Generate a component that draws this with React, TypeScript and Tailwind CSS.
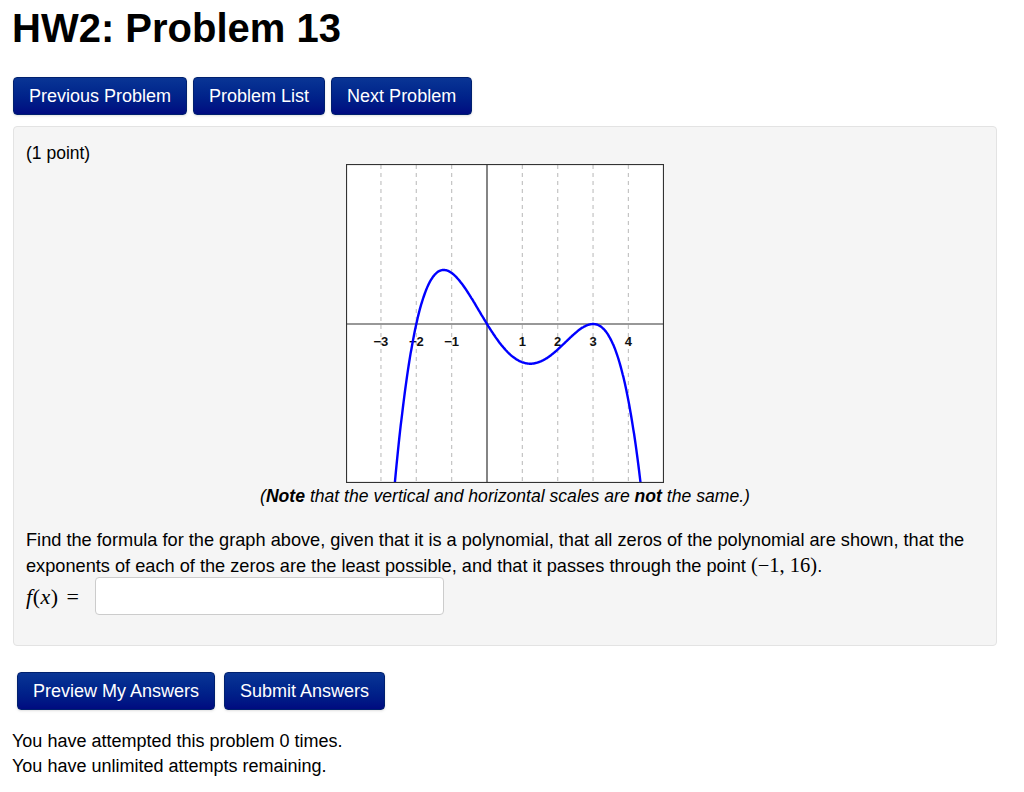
const UX = 35.35;
const UY = 3.19;
const OX = 141;
const OY = 160;

function f(x: number) {
  return -x * (x + 2) * (x - 3) * (x - 3);
}

const curve: string[] = [];
for (let x = -2.64; x <= 4.38; x += 0.02) {
  curve.push(`${(OX + x * UX).toFixed(1)},${(OY - f(x) * UY).toFixed(1)}`);
}

const ticks = [-3, -2, -1, 1, 2, 3, 4];

function Graph() {
  return (
    <svg width="318" height="319" viewBox="0 0 318 319" className="block bg-white">
      {ticks.map((t) => (
        <line
          key={t}
          x1={OX + t * UX}
          y1={1}
          x2={OX + t * UX}
          y2={318}
          stroke="#c4c4c4"
          strokeWidth="1.2"
          strokeDasharray="4 4"
        />
      ))}
      <line x1={0} y1={OY} x2={318} y2={OY} stroke="#333" strokeWidth="1.2" />
      <line x1={OX} y1={0} x2={OX} y2={319} stroke="#333" strokeWidth="1.2" />
      {ticks.map((t) => (
        <text
          key={t}
          x={OX + t * UX}
          y={182}
          textAnchor="middle"
          fontSize="13"
          fontWeight="bold"
          fontFamily="'Liberation Sans', Arial, sans-serif"
          fill="#111"
        >
          {t < 0 ? `−${-t}` : t}
        </text>
      ))}
      <svg x="0" y="0" width="318" height="318" overflow="hidden">
        <polyline points={curve.join(' ')} fill="none" stroke="#0000ff" strokeWidth="2.4" strokeLinejoin="round" />
      </svg>
      <rect x="0.5" y="0.5" width="317" height="318" fill="none" stroke="#333" strokeWidth="1.2" />
    </svg>
  );
}

function NavButton({ children }: { children: React.ReactNode }) {
  return (
    <button className="h-[38px] px-[15px] rounded-[4px] border border-[#00206e] bg-gradient-to-b from-[#0a3595] to-[#000a80] text-white text-[18px] leading-none shadow-sm">
      {children}
    </button>
  );
}

const serif = { fontFamily: "'Liberation Serif', 'Times New Roman', serif" };

export default function App() {
  return (
    <div
      className="min-h-[792px] bg-white text-black px-3 pt-[6px] text-[18px]"
      style={{ fontFamily: "'Liberation Sans', Arial, Helvetica, sans-serif" }}
    >
      <h1 className="text-[40px] leading-[44px] font-bold">HW2: Problem 13</h1>

      <div className="flex gap-[6px] mt-[27px] ml-px">
        <NavButton>Previous Problem</NavButton>
        <NavButton>Problem List</NavButton>
        <NavButton>Next Problem</NavButton>
      </div>

      <div className="mt-[11px] ml-px w-[984px] h-[520px] bg-[#f5f5f5] border border-[#e3e3e3] rounded-[4px] px-3 pt-[14px]">
        <div className="leading-[25px] text-[17.5px]">(1 point)</div>
        <div className="flex justify-center mt-[-2px]">
          <Graph />
        </div>
        <div className="text-center italic text-[17.6px] leading-[25px] mt-[1px]">
          (<b>Note</b> that the vertical and horizontal scales are <b>not</b> the same.)
        </div>
        <p className="mt-[19px] text-[18.2px] leading-[25px]">
          Find the formula for the graph above, given that it is a polynomial, that all zeros of the polynomial are
          shown, that the exponents of each of the zeros are the least possible, and that it passes through the point{' '}
          <span style={serif} className="text-[20.5px]">
            (−1, 16)
          </span>
          .
        </p>
        <div className="flex items-center mt-[-2px]">
          <span className="text-[22px] mr-[16px] whitespace-nowrap tracking-[0.5px]" style={serif}>
            <i>f</i>(<i>x</i>)<span className="ml-[8px]">=</span>
          </span>
          <input
            type="text"
            className="w-[349px] h-[38px] bg-white border border-[#cccccc] rounded-[4px] px-2 outline-none"
          />
        </div>
      </div>

      <div className="flex gap-[9px] mt-[26px] ml-[5px]">
        <NavButton>Preview My Answers</NavButton>
        <NavButton>Submit Answers</NavButton>
      </div>

      <div className="mt-[19px] text-[18px] leading-[25px]">
        <div>You have attempted this problem 0 times.</div>
        <div>You have unlimited attempts remaining.</div>
      </div>
    </div>
  );
}
